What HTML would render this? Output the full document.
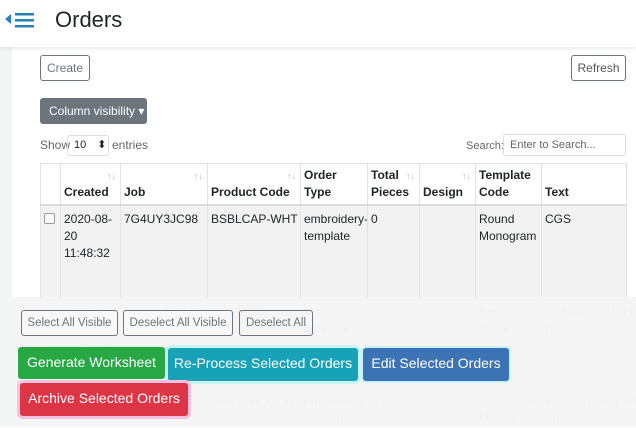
<!DOCTYPE html><html><head><style>
*{box-sizing:border-box;margin:0;padding:0}
body{width:636px;height:427px;overflow:hidden;font-family:"Liberation Sans",sans-serif;background:#fff;position:relative;color:#212529}
.hdr{position:absolute;left:0;top:0;width:636px;height:47px;background:#fff;box-shadow:0 2px 3px rgba(0,0,0,.08);z-index:2}
.side{position:absolute;left:0;top:47px;width:12px;height:380px;background:#f3f4f6}
.t{position:absolute;font-size:12px;line-height:17px}
.btn{position:absolute;border:1px solid #6c757d;border-radius:3px;font-size:12px;color:#6c757d;background:#fff;text-align:center;white-space:nowrap}
table{position:absolute;left:40px;top:163px;border-collapse:collapse;font-size:12px;line-height:17px;table-layout:fixed;width:586px}
td,th{border:1px solid #e3e3e3;vertical-align:bottom;text-align:left;padding:3px 3px;position:relative;overflow:hidden;white-space:nowrap}
th{height:40px;font-weight:bold;border-bottom:2px solid #dcdcdc}
td{vertical-align:top;padding:5px 3px;height:95px;background:#f2f2f2}
th i{position:absolute;right:4px;top:4px;font-style:normal;color:#bbb;font-size:9px}
.ov{position:absolute;left:0;top:297px;width:636px;height:130px;background:rgba(244,244,244,.92)}
.b2{position:absolute;color:#fff;font-size:14px;border-radius:3px;text-align:center;line-height:31px;white-space:nowrap}
.f{position:absolute;color:#ccc;font-size:12px;line-height:17px;white-space:nowrap}
</style></head><body>
<div class="hdr">
<svg style="position:absolute;left:4px;top:10px" width="32" height="20"><polygon points="1,9 7,4 7,14" fill="#2a80b9"/><rect x="11" y="3" width="19" height="2.5" fill="#2a80b9"/><rect x="11" y="9" width="19" height="2.5" fill="#2a80b9"/><rect x="11" y="15" width="19" height="2.5" fill="#2a80b9"/></svg>
<div style="position:absolute;left:55px;top:7px;font-size:22px">Orders</div>
</div>
<div class="side"></div>
<div class="btn" style="left:40px;top:55px;width:50px;height:26px;line-height:24px">Create</div>
<div class="btn" style="left:571px;top:55px;width:55px;height:26px;line-height:24px;color:#555">Refresh</div>
<div style="position:absolute;left:40px;top:98px;width:107px;height:26px;background:#6c757d;color:#fff;border-radius:3px;font-size:12px;line-height:26px;padding-left:9px">Column visibility ▾</div>
<div class="t" style="left:40px;top:137px;color:#666">Show</div>
<div style="position:absolute;left:67px;top:135px;width:42px;height:21px;border:1px solid #ddd;border-radius:3px;font-size:11px;line-height:19px;padding-left:6px">10 <span style="margin-left:8px">⬍</span></div>
<div class="t" style="left:112px;top:137px;color:#666">entries</div>
<div class="t" style="left:466px;top:138px;color:#666;font-size:11px">Search:</div>
<div style="position:absolute;left:503px;top:134px;width:123px;height:22px;border:1px solid #ddd;border-radius:3px;font-size:11px;line-height:20px;padding-left:6px;color:#666">Enter to Search...</div>
<table>
<colgroup><col style="width:20px"><col style="width:60px"><col style="width:87px"><col style="width:93px"><col style="width:67px"><col style="width:52px"><col style="width:56px"><col style="width:66px"><col style="width:85px"></colgroup>
<tr><th></th><th>Created<i>↑↓</i></th><th>Job<i>↑↓</i></th><th>Product Code<i>↑↓</i></th><th>Order<br>Type</th><th>Total<br>Pieces<i>↑↓</i></th><th>Design<i>↑↓</i></th><th>Template<br>Code</th><th>Text</th></tr>
<tr><td><span style="display:inline-block;width:11px;height:11px;border:1px solid #999;border-radius:2px;background:#fff;margin-top:2px"></span></td><td>2020-08-<br>20<br>11:48:32</td><td>7G4UY3JC98</td><td>BSBLCAP-WHT</td><td>embroidery-<br>template</td><td>0</td><td></td><td>Round<br>Monogram</td><td>CGS</td></tr>
</table>
<div class="f" style="left:64px;top:303px">2020-08-<br>20<br>11:57:13</div>
<div class="f" style="left:124px;top:303px">2LBWHHZAO3Q</div>
<div class="f" style="left:211px;top:303px">PROMOS</div>
<div class="f" style="left:304px;top:303px">print-<br>template</div>
<div class="f" style="left:371px;top:303px">0</div>
<div class="f" style="left:479px;top:303px">Red and<br>White</div>
<div class="f" style="left:545px;top:303px">COLLEGIATE,FO<br>HILL,7</div>
<div class="f" style="left:211px;top:394px">WHITEHOODIE-1</div>
<div class="f" style="left:304px;top:394px">embroidery-<br>template</div>
<div class="f" style="left:371px;top:394px">0</div>
<div class="f" style="left:479px;top:394px">002-School<br>Mascot</div>
<div class="f" style="left:545px;top:394px">FOREST HILL,BE<br>- Bear</div>
<div class="ov"></div>
<div class="btn" style="left:21px;top:310px;width:97px;height:26px;line-height:24px;background:#f8f8f8;font-size:11.5px">Select All Visible</div>
<div class="btn" style="left:123px;top:310px;width:110px;height:26px;line-height:24px;background:#f8f8f8;font-size:11.5px">Deselect All Visible</div>
<div class="btn" style="left:239px;top:310px;width:74px;height:26px;line-height:24px;background:transparent;font-size:11.5px">Deselect All</div>
<div class="b2" style="left:18px;top:347px;width:147px;height:32px;background:#28a745">Generate Worksheet</div>
<div class="b2" style="left:168px;top:348px;width:190px;height:33px;background:#17a2b8;box-shadow:0 0 0 3px #c8f4f8">Re-Process Selected Orders</div>
<div class="b2" style="left:363px;top:348px;width:146px;height:33px;background:#3c73b4;box-shadow:0 0 0 2px #c8f4f8">Edit Selected Orders</div>
<div class="b2" style="left:20px;top:383px;width:168px;height:33px;background:#dc3545;box-shadow:0 0 0 3px #f8c0e0">Archive Selected Orders</div>
</body></html>
